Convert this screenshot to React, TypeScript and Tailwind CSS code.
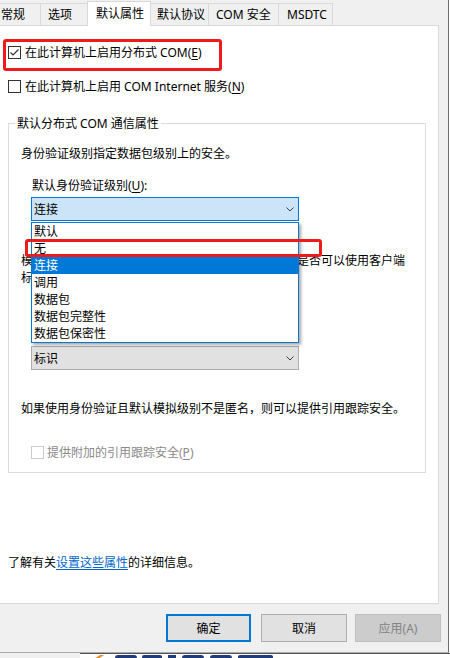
import React from "react";

const tabs = [
  { label: "常规", w: "w-[57px] -ml-[16px] pl-[17px]", active: false },
  { label: "选项", w: "w-[47px] pl-[7px]", active: false },
  { label: "默认属性", w: "w-[64px] pl-[8px]", active: true },
  { label: "默认协议", w: "w-[58px] pl-[6px]", active: false },
  { label: "COM 安全", w: "w-[70px] pl-[7px]", active: false },
  { label: "MSDTC", w: "w-[54px] pl-[8px]", active: false },
];

const authLevels = ["默认", "无", "连接", "调用", "数据包", "数据包完整性", "数据包保密性"];

const Chevron = () => (
  <svg width="8" height="5" viewBox="0 0 8 5" className="mr-[4px]">
    <path d="M0.5 0.5 L4 4 L7.5 0.5" fill="none" stroke="#404040" strokeWidth="1" />
  </svg>
);

const CheckBox = ({ checked, disabled }: { checked?: boolean; disabled?: boolean }) => (
  <span
    className={
      disabled
        ? "w-[13px] h-[13px] border border-[#cccccc] bg-white shrink-0"
        : "w-[13px] h-[13px] border border-[#333333] bg-white shrink-0 flex items-center justify-center"
    }
  >
    {checked && (
      <svg width="11" height="11" viewBox="0 0 11 11">
        <path d="M1.5 5.5 L4 8 L9.5 2.5" fill="none" stroke="#333333" strokeWidth="1.2" />
      </svg>
    )}
  </span>
);

const Ul = ({ children }: { children: React.ReactNode }) => (
  <span className="underline underline-offset-2">{children}</span>
);

export default function App() {
  return (
    <div className="relative w-[450px] h-[658px] overflow-hidden bg-white font-['Noto_Sans','Noto_Sans_CJK_SC',sans-serif] text-[12px] text-black">
      <div className="w-[449px] h-[653px] bg-[#f0f0f0] border-r border-b border-r-[#6e6e6e] border-b-[#a9a9a9] flex flex-col">
        {/* tab strip */}
        <div className="h-[25px] flex items-end">
          {tabs.map((t) =>
            t.active ? (
              <div
                key={t.label}
                className={`${t.w} relative z-10 -ml-px -mb-px h-[25px] bg-white border-t border-x border-[#d9d9d9] flex items-center leading-[17px] pb-[1px] shrink-0`}
              >
                {t.label}
              </div>
            ) : (
              <div
                key={t.label}
                className={`${t.w} h-[22px] border-t border-r border-[#d9d9d9] flex items-center leading-[17px] shrink-0`}
              >
                {t.label}
              </div>
            )
          )}
        </div>

        {/* page */}
        <div className="w-[439px] h-[579px] bg-white border-t border-r border-b border-[#d9d9d9] flex flex-col">
          <label className="mt-[18px] pl-[8px] flex items-center gap-[4px] h-[17px] leading-[17px]">
            <CheckBox checked />
            <span>
              在此计算机上启用分布式 COM(<Ul>E</Ul>)
            </span>
          </label>
          <label className="mt-[17px] pl-[8px] flex items-center gap-[4px] h-[17px] leading-[17px]">
            <CheckBox />
            <span>
              在此计算机上启用 COM Internet 服务(<Ul>N</Ul>)
            </span>
          </label>

          {/* group box */}
          <div className="relative mt-[28px] ml-[8px] w-[418px] border border-[#dcdcdc] pl-[12px] pb-[11px] flex flex-col">
            <span className="absolute -top-[9px] left-[6px] bg-white px-[2px] leading-[17px]">
              默认分布式 COM 通信属性
            </span>
            <p className="mt-[21px] leading-[17px]">身份验证级别指定数据包级别上的安全。</p>
            <p className="mt-[15px] ml-[11px] leading-[17px]">
              默认身份验证级别(<Ul>U</Ul>):
            </p>
            <div className="relative mt-[3px] ml-[10px] w-[268px] h-[24px] bg-[#cce4f7] border border-[#0078d7] flex items-center justify-between pl-[2px] leading-[17px]">
              <span>连接</span>
              <Chevron />

              {/* open list */}
              <div className="absolute z-20 -left-px top-[24px] w-[268px] h-[121px] bg-white border border-[#0078d7] shadow-[2px_2px_3px_rgba(0,0,0,0.35)] flex flex-col">
                {authLevels.map((lvl) => (
                  <div
                    key={lvl}
                    className={
                      lvl === "连接"
                        ? "h-[17px] leading-[17px] pl-[2px] bg-[#0078d7] text-white"
                        : "h-[17px] leading-[17px] pl-[2px]"
                    }
                  >
                    {lvl}
                  </div>
                ))}
                <div className="absolute -left-[7px] top-[16px] w-[297px] h-[18px] border-[3px] border-[#f01a1a] rounded-[3px]" />
              </div>
            </div>

            <p className="mt-[31px] leading-[17px] whitespace-nowrap">
              模拟级别可以确定谁在调用应用程序，以及应用程序是否可以使用客户端
              <br />
              标识执行操作。
            </p>
            <p className="mt-[40px] ml-[11px] leading-[17px]">
              默认模拟级别(<Ul>I</Ul>):
            </p>
            <div className="mt-[3px] ml-[10px] w-[268px] h-[24px] bg-[#e1e1e1] border border-[#adadad] flex items-center justify-between pl-[2px] leading-[17px]">
              <span>标识</span>
              <Chevron />
            </div>

            <p className="mt-[30px] leading-[17px]">
              如果使用身份验证且默认模拟级别不是匿名，则可以提供引用跟踪安全。
            </p>
            <label className="mt-[27px] ml-[10px] flex items-center gap-[3px] h-[17px] leading-[17px] text-[#8a8a8a]">
              <CheckBox disabled />
              <span>
                提供附加的引用跟踪安全(<Ul>P</Ul>)
              </span>
            </label>
          </div>

          <p className="mt-[81px] pl-[8px] leading-[17px]">
            了解有关<span className="text-[#0066cc] underline underline-offset-2">设置这些属性</span>的详细信息。
          </p>
        </div>

        {/* dialog buttons */}
        <div className="mt-[10px] flex">
          <button className="ml-[166px] w-[85px] h-[28px] bg-[#e1e1e1] border-2 border-[#0078d7] leading-[17px]">
            确定
          </button>
          <button className="ml-[10px] w-[86px] h-[28px] bg-[#e1e1e1] border border-[#adadad] leading-[17px]">
            取消
          </button>
          <button className="ml-[8px] w-[86px] h-[28px] bg-[#cccccc] border border-[#bfbfbf] text-[#838383] leading-[17px]">
            应用(A)
          </button>
        </div>
      </div>

      {/* window underneath */}
      <div className="flex h-[5px]">
        <div className="w-[80px] bg-[#f0f0f0]" />
        <div className="flex-1 bg-white border-t border-[#555555] relative">
          <svg width="200" height="5" viewBox="0 0 200 5" className="absolute left-[12px] top-0">
            <path d="M2 5 L8 1 L12 1 L6 5 Z" fill="#e8892b" />
            <rect x="23" y="1" width="22" height="6" rx="3" fill="#1f3b7a" />
            <rect x="50" y="1" width="20" height="6" rx="2" fill="#1f3b7a" />
            <rect x="76" y="1" width="8" height="6" fill="#1f3b7a" />
            <rect x="90" y="1" width="22" height="6" rx="3" fill="#1f3b7a" />
            <rect x="118" y="1" width="22" height="6" rx="3" fill="#1f3b7a" />
            <rect x="146" y="1" width="35" height="6" rx="2" fill="#1f3b7a" />
          </svg>
        </div>
      </div>

      <div className="absolute left-[3px] top-[39px] w-[219px] h-[32px] border-[3px] border-[#f01a1a] rounded-[3px]" />
    </div>
  );
}
